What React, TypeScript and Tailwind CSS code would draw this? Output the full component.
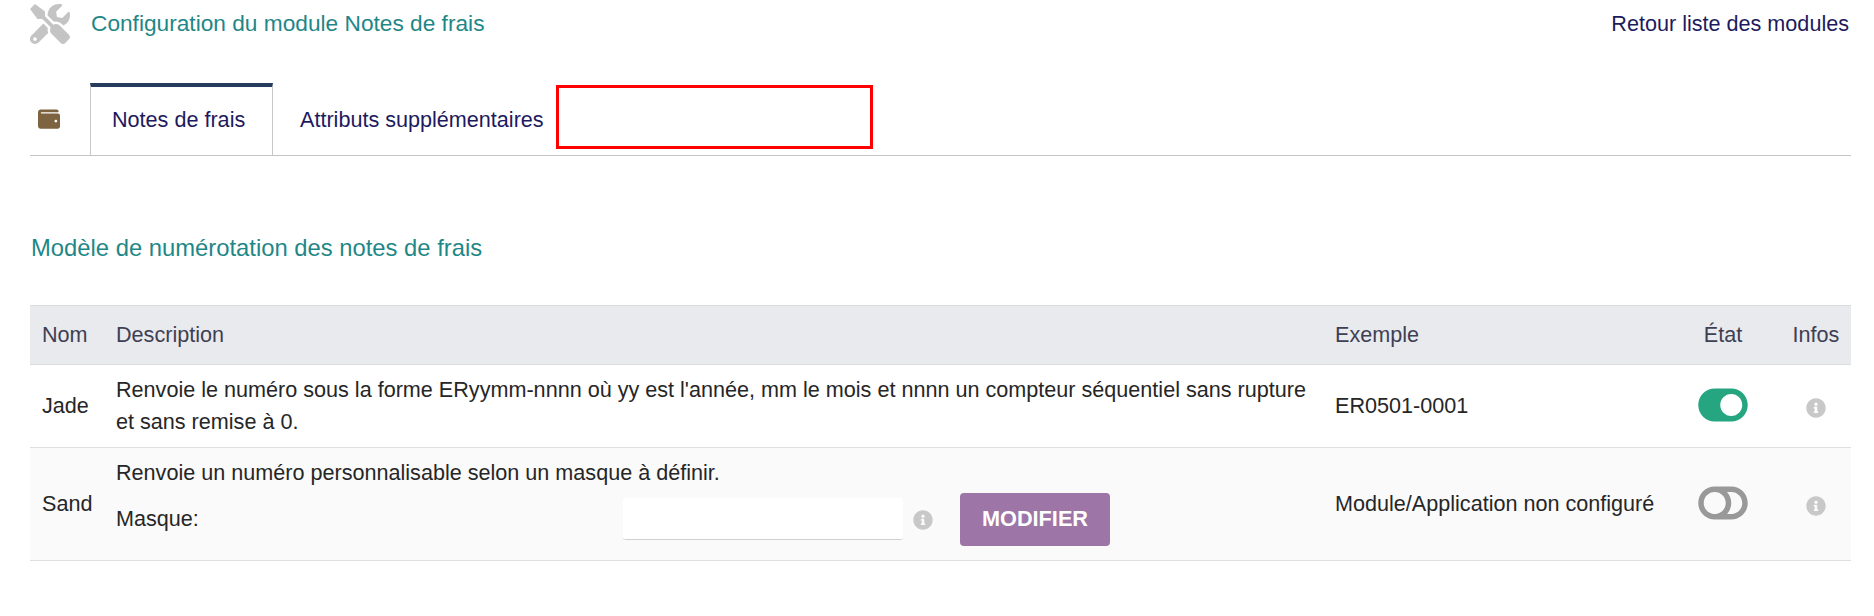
import React from 'react';
import { FaTools, FaWallet, FaInfoCircle, FaToggleOn, FaToggleOff } from 'react-icons/fa';

const InfoIcon = () => <FaInfoCircle className="text-[20px] text-[#c8c8c8]" />;

const App = () => {
  return (
    <div className="min-h-[616px] bg-white pl-[30px] pr-[23px] font-['Liberation_Sans',Arial,sans-serif] text-[21.6px] text-[#262626]">
      <div className="flex h-[47px] items-start justify-between">
        <div className="flex items-center">
          <FaTools className="mt-[4px] h-[40px] w-[40px] text-[#c4c4c4]" />
          <div className="mt-[2px] ml-[21px] text-[22.7px] text-[#1f8787]">Configuration du module Notes de frais</div>
        </div>
        <a className="mt-[8px] mr-[2px] text-[#1d1a5e]">Retour liste des modules</a>
      </div>

      <div className="relative mt-[36px] flex h-[73px] border-b border-[#c4c4c4]">
        <div className="flex w-[60px] items-center pl-[7px]">
          <FaWallet className="h-[22px] w-[24px] text-[#7d6340]" />
        </div>
        <div className="flex w-[183px] items-center border-x border-t-4 border-x-[#c8c8c8] border-t-[#263c5c] pb-[2px] pl-[21px] text-[#1d1a5e]">
          Notes de frais
        </div>
        <div className="flex items-center pt-[2px] pl-[27px] text-[#1d1a5e]">Attributs supplémentaires</div>
        <div className="absolute top-[2px] left-[526px] h-[64px] w-[317px] border-[3px] border-[#ff0000]" />
      </div>

      <h2 className="mt-[78px] ml-[1px] text-[23.8px] leading-[28px] font-normal text-[#1f8787]">
        Modèle de numérotation des notes de frais
      </h2>

      <table className="mt-[43px] w-full table-fixed border-collapse">
        <colgroup>
          <col className="w-[74px]" />
          <col />
          <col className="w-[342px]" />
          <col className="w-[116px]" />
          <col className="w-[70px]" />
        </colgroup>
        <thead>
          <tr className="h-[59px] border-y border-[#dcdcdc] bg-[#e9eaed] text-left text-[#3f3f54]">
            <th className="px-3 font-normal">Nom</th>
            <th className="px-3 font-normal">Description</th>
            <th className="pl-3 font-normal">Exemple</th>
            <th className="text-center font-normal">État</th>
            <th className="text-center font-normal">Infos</th>
          </tr>
        </thead>
        <tbody>
          <tr className="h-[83px] border-b border-[#e0e0e0]">
            <td className="px-3">Jade</td>
            <td className="px-3 leading-[32px]">
              Renvoie le numéro sous la forme ERyymm-nnnn où yy est l'année, mm le mois et nnnn un compteur séquentiel sans rupture et sans remise à 0.
            </td>
            <td className="pl-3">ER0501-0001</td>
            <td>
              <FaToggleOn className="mx-auto -mt-[2px] h-[44px] w-[50px] text-[#25a580]" />
            </td>
            <td>
              <div className="flex justify-center pt-[3px]"><InfoIcon /></div>
            </td>
          </tr>
          <tr className="h-[113px] border-b border-[#e0e0e0] bg-[#fafafa]">
            <td className="px-3">Sand</td>
            <td className="px-3 pt-[9px] align-top">
              <div className="leading-[32px]">Renvoie un numéro personnalisable selon un masque à définir.</div>
              <div className="mt-[4px] flex items-center">
                <div className="w-[507px]">Masque:</div>
                <div className="mb-[2px] h-[42px] w-[280px] rounded-[3px] border-b border-[#d0d0d0] bg-white" />
                <div className="ml-[10px] flex"><InfoIcon /></div>
                <button className="ml-[27px] h-[53px] w-[150px] rounded-[4px] bg-[#9d75a7] text-[21.7px] font-bold text-white">
                  MODIFIER
                </button>
              </div>
            </td>
            <td className="pl-3 whitespace-nowrap">Module/Application non configuré</td>
            <td>
              <FaToggleOff className="mx-auto -mt-[2px] h-[44px] w-[50px] text-[#999999]" />
            </td>
            <td>
              <div className="flex justify-center pt-[3px]"><InfoIcon /></div>
            </td>
          </tr>
        </tbody>
      </table>
    </div>
  );
};

export default App;
